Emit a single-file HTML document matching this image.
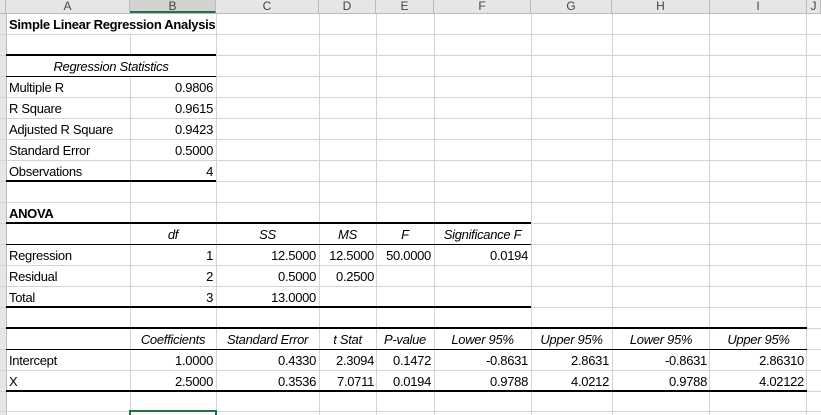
<!DOCTYPE html>
<html><head><style>
html,body{margin:0;width:821px;height:415px;overflow:hidden}
body{background:#fff;font-family:"Liberation Sans",sans-serif;font-size:13px;color:#000;position:relative}
.v{position:absolute;top:0;width:1px;height:402px;background:#d4d4d4}
.h{position:absolute;left:0;height:1px;width:821px;background:#d4d4d4}
.c{position:absolute;height:21px;line-height:23px;white-space:nowrap;overflow:visible;letter-spacing:-0.3px}
.r{text-align:right}.m{text-align:center}.i{font-style:italic}.b{font-weight:bold}
.k{position:absolute;height:2px;background:#000}
.t{position:absolute;height:1px;background:#000}
.hd{position:absolute;top:0;height:13px;background:#e6e6e6;color:#444;font-size:12px;line-height:13px;text-align:center;border-right:1px solid #bbb;box-sizing:border-box}
</style></head><body>
<div class="hd" style="left:0;width:6px"></div>
<div class="hd" style="left:6px;width:124px">A</div>
<div class="hd" style="left:130px;width:86px;background:#d2d2d2;border-bottom:2px solid #217346">B</div>
<div class="hd" style="left:216px;width:103px">C</div>
<div class="hd" style="left:319px;width:57px">D</div>
<div class="hd" style="left:376px;width:58px">E</div>
<div class="hd" style="left:434px;width:97px">F</div>
<div class="hd" style="left:531px;width:81px">G</div>
<div class="hd" style="left:612px;width:98px">H</div>
<div class="hd" style="left:710px;width:97px">I</div>
<div class="hd" style="left:807px;width:14px">J</div>
<div style="position:absolute;left:0;top:13px;width:6px;height:402px;background:#e6e6e6"></div>

<div class="v" style="left:6px;top:13px;background:#bbb"></div>
<div class="v" style="left:130px;top:13px"></div><div class="v" style="left:216px;top:13px"></div>
<div class="v" style="left:319px;top:13px"></div><div class="v" style="left:376px;top:13px"></div>
<div class="v" style="left:434px;top:13px"></div><div class="v" style="left:531px;top:13px"></div>
<div class="v" style="left:612px;top:13px"></div><div class="v" style="left:709px;top:13px"></div>
<div class="v" style="left:806px;top:13px"></div>

<div class="h" style="top:13px;background:#bbb"></div>
<div class="h" style="top:34px"></div><div class="h" style="top:55px"></div><div class="h" style="top:76px"></div>
<div class="h" style="top:97px"></div><div class="h" style="top:118px"></div><div class="h" style="top:139px"></div>
<div class="h" style="top:160px"></div><div class="h" style="top:181px"></div><div class="h" style="top:202px"></div>
<div class="h" style="top:223px"></div><div class="h" style="top:244px"></div><div class="h" style="top:265px"></div>
<div class="h" style="top:286px"></div><div class="h" style="top:307px"></div><div class="h" style="top:328px"></div>
<div class="h" style="top:349px"></div><div class="h" style="top:370px"></div><div class="h" style="top:391px"></div>
<div class="h" style="top:411px"></div>

<div style="position:absolute;left:7px;top:14px;width:209px;height:20px;background:#fff"></div>
<div style="position:absolute;left:7px;top:56px;width:209px;height:20px;background:#fff"></div>

<div class="c b" style="left:9px;top:13px">Simple Linear Regression Analysis</div>
<div class="c i m" style="left:6px;top:55px;width:210px">Regression Statistics</div>
<div class="k" style="left:6px;top:54px;width:210px"></div>
<div class="t" style="left:6px;top:76px;width:210px"></div>
<div class="c" style="left:9px;top:76px">Multiple R</div><div class="c r" style="left:130px;top:76px;width:83px">0.9806</div>
<div class="c" style="left:9px;top:97px">R Square</div><div class="c r" style="left:130px;top:97px;width:83px">0.9615</div>
<div class="c" style="left:9px;top:118px">Adjusted R Square</div><div class="c r" style="left:130px;top:118px;width:83px">0.9423</div>
<div class="c" style="left:9px;top:139px">Standard Error</div><div class="c r" style="left:130px;top:139px;width:83px">0.5000</div>
<div class="c" style="left:9px;top:160px">Observations</div><div class="c r" style="left:130px;top:160px;width:83px">4</div>
<div class="k" style="left:6px;top:180px;width:210px"></div>

<div class="c b" style="left:9px;top:202px">ANOVA</div>
<div class="k" style="left:6px;top:222px;width:525px"></div>
<div class="c i m" style="left:130px;top:223px;width:86px">df</div>
<div class="c i m" style="left:216px;top:223px;width:103px">SS</div>
<div class="c i m" style="left:319px;top:223px;width:57px">MS</div>
<div class="c i m" style="left:376px;top:223px;width:58px">F</div>
<div class="c i m" style="left:434px;top:223px;width:97px">Significance F</div>
<div class="t" style="left:6px;top:244px;width:525px"></div>
<div class="c" style="left:9px;top:244px">Regression</div><div class="c r" style="left:130px;top:244px;width:83px">1</div>
<div class="c r" style="left:216px;top:244px;width:100px">12.5000</div><div class="c r" style="left:319px;top:244px;width:55px">12.5000</div>
<div class="c r" style="left:376px;top:244px;width:55px">50.0000</div><div class="c r" style="left:434px;top:244px;width:94px">0.0194</div>
<div class="c" style="left:9px;top:265px">Residual</div><div class="c r" style="left:130px;top:265px;width:83px">2</div>
<div class="c r" style="left:216px;top:265px;width:100px">0.5000</div><div class="c r" style="left:319px;top:265px;width:55px">0.2500</div>
<div class="c" style="left:9px;top:286px">Total</div><div class="c r" style="left:130px;top:286px;width:83px">3</div>
<div class="c r" style="left:216px;top:286px;width:100px">13.0000</div>
<div class="k" style="left:6px;top:306px;width:525px"></div>

<div class="k" style="left:6px;top:327px;width:801px"></div>
<div class="c i m" style="left:130px;top:328px;width:86px">Coefficients</div>
<div class="c i m" style="left:216px;top:328px;width:103px">Standard Error</div>
<div class="c i m" style="left:319px;top:328px;width:57px">t Stat</div>
<div class="c i m" style="left:376px;top:328px;width:58px">P-value</div>
<div class="c i m" style="left:434px;top:328px;width:97px">Lower 95%</div>
<div class="c i m" style="left:531px;top:328px;width:81px">Upper 95%</div>
<div class="c i m" style="left:612px;top:328px;width:98px">Lower 95%</div>
<div class="c i m" style="left:710px;top:328px;width:97px">Upper 95%</div>
<div class="t" style="left:6px;top:349px;width:801px"></div>
<div class="c" style="left:9px;top:349px">Intercept</div><div class="c r" style="left:130px;top:349px;width:83px">1.0000</div>
<div class="c r" style="left:216px;top:349px;width:100px">0.4330</div><div class="c r" style="left:319px;top:349px;width:55px">2.3094</div>
<div class="c r" style="left:376px;top:349px;width:55px">0.1472</div><div class="c r" style="left:434px;top:349px;width:94px">-0.8631</div>
<div class="c r" style="left:531px;top:349px;width:78px">2.8631</div><div class="c r" style="left:612px;top:349px;width:95px">-0.8631</div>
<div class="c r" style="left:710px;top:349px;width:94px">2.86310</div>
<div class="c" style="left:9px;top:370px">X</div><div class="c r" style="left:130px;top:370px;width:83px">2.5000</div>
<div class="c r" style="left:216px;top:370px;width:100px">0.3536</div><div class="c r" style="left:319px;top:370px;width:55px">7.0711</div>
<div class="c r" style="left:376px;top:370px;width:55px">0.0194</div><div class="c r" style="left:434px;top:370px;width:94px">0.9788</div>
<div class="c r" style="left:531px;top:370px;width:78px">4.0212</div><div class="c r" style="left:612px;top:370px;width:95px">0.9788</div>
<div class="c r" style="left:710px;top:370px;width:94px">4.02122</div>
<div class="k" style="left:6px;top:390px;width:801px"></div>

<div style="position:absolute;left:129px;top:410px;width:88px;height:5px;border:2px solid #217346;border-bottom:none;box-sizing:border-box"></div>
</body></html>
